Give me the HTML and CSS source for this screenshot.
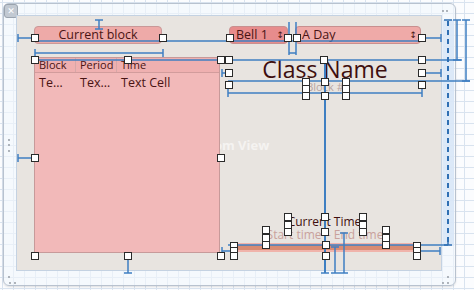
FILE: index.html
```html
<!DOCTYPE html>
<html lang="en">
<head>
    <meta charset="UTF-8">
    <title>Bell Schedule - Interface Builder</title>
    <link rel="stylesheet" href="styles.css">
</head>
<body>

    <div class="canvas">
        <div class="window">
            <div class="close-btn">&#x2715;</div>

            <div class="view">
                <div class="custom-view-label">Custom View</div>

                <div class="button current-block">Current block</div>

                <div class="table">
                    <div class="table-header">
                        <div class="col col-block">Block</div>
                        <div class="col col-period">Period</div>
                        <div class="col col-time">Time</div>
                    </div>
                    <div class="table-row">
                        <div class="col col-block">Te…</div>
                        <div class="col col-period">Tex…</div>
                        <div class="col col-time">Text Cell</div>
                    </div>
                </div>

                <div class="popup bell">
                    <span>Bell 1</span>
                    <span class="arrows">&#x2195;</span>
                </div>
                <div class="popup day">
                    <span>A Day</span>
                    <span class="arrows">&#x2195;</span>
                </div>

                <div class="label class-name">Class Name</div>
                <div class="label block-num">Block #</div>

                <div class="label current-time">Current Time</div>
                <div class="label time-range">Start time – End time</div>

                <div class="progress">
                    <div class="progress-fill"></div>
                </div>
            </div>
        </div>

        <!-- constraints and selection handles drawn over the canvas -->
        <svg class="overlay" width="474" height="290" viewBox="0 0 474 290">
            <rect x="443" y="17" width="11" height="226" fill="#d6e5f6" opacity="0.8"/>

            <g fill="#8d949c">
                <circle cx="443" cy="8" r="0.9"/><circle cx="447" cy="8" r="0.9"/>
                <circle cx="9" cy="137" r="0.9"/><circle cx="9" cy="142" r="0.9"/><circle cx="9" cy="148" r="0.9"/>
                <circle cx="9" cy="274" r="0.9"/><circle cx="10" cy="280" r="0.9"/><circle cx="15" cy="280" r="0.9"/>
                <circle cx="448" cy="274" r="0.9"/><circle cx="443" cy="280" r="0.9"/><circle cx="448" cy="280" r="0.9"/>
            </g>

            <g stroke="#3f7fc2" stroke-width="1.5" fill="none">
                <!-- guide lines -->
                <path d="M35 38H422"/>
                <path d="M35 57H462"/>
                <path d="M228 78H470"/>
                <path d="M228 242H448"/>
                <path d="M289 19V52M296 19V52"/>

                <!-- I-beams -->
                <path d="M18 35H35M18 31V39"/>
                <path d="M18 155H35M18 151V159"/>
                <path d="M99 17V26M95 17H103M95 26H103"/>
                <path d="M35 50H163M35 46V54M163 46V54"/>
                <path d="M128 253V270M124 270H132"/>
                <path d="M289 50H296"/>
                <path d="M422 35H441M441 31V39"/>
                <path d="M222 70H228M222 66V74"/>
                <path d="M422 70H441M441 66V74"/>
                <path d="M228 90H422M228 86V94M422 86V94"/>
                <path d="M222 248H234M222 244V252"/>
                <path d="M417 248H440M440 244V252"/>
                <path d="M457 17V57M453 17H461M453 57H461"/>
                <path d="M466 17V78M462 17H470M462 78H470"/>
                <path d="M335 244V270M331 244H339"/>
                <path d="M344 230V270M340 230H348"/>
                <path d="M331 270H348"/>
            </g>
            <path d="M325 57V270" stroke="#3f7fc2" stroke-width="2" fill="none"/>
            <path d="M321 270H329" stroke="#3f7fc2" stroke-width="1.5" fill="none"/>
            <path d="M448 18V240" stroke="#2f6fb3" stroke-width="2" stroke-dasharray="5 4" fill="none"/>
            <path d="M444 17H452M444 242H452M448 238V242" stroke="#2f6fb3" stroke-width="1.5" fill="none"/>

            <g id="handles" fill="#ffffff" stroke="#2a2a2a" stroke-width="1"></g>
        </svg>
    </div>

    <script>
        // selection handle centres, page coordinates
        const handles = [
            [35, 35], [163, 35],
            [35, 57], [128, 57], [221, 57], [35, 155], [221, 155], [35, 253], [128, 253], [221, 253],
            [230, 35], [288, 35], [297, 35], [422, 35],
            [229, 57], [324, 57], [422, 57], [229, 70], [422, 70], [229, 82], [422, 82],
            [306, 79], [325, 79], [346, 79], [306, 86], [346, 86], [306, 93], [325, 93], [346, 93],
            [288, 214], [325, 214], [363, 214], [288, 222], [363, 222], [288, 229], [325, 229], [363, 229],
            [266, 227], [386, 227], [266, 235], [386, 235], [266, 242], [326, 242], [386, 242],
            [234, 243], [234, 248], [234, 253], [417, 243], [417, 248], [417, 253], [326, 253]
        ];
        const group = document.getElementById('handles');
        handles.forEach(function(h) {
            const r = document.createElementNS('http://www.w3.org/2000/svg', 'rect');
            r.setAttribute('x', h[0] - 3.5);
            r.setAttribute('y', h[1] - 3.5);
            r.setAttribute('width', 7);
            r.setAttribute('height', 7);
            group.appendChild(r);
        });
    </script>

</body>
</html>
```

FILE: styles.css
```css
body {
    margin: 0;
    width: 474px;
    height: 290px;
    overflow: hidden;
    font-family: "Open Sans", "DejaVu Sans", sans-serif;
    background-color: #fbfcfe;
    background-image:
        linear-gradient(to right, #d9e3ef 1px, transparent 1px),
        linear-gradient(to bottom, #d9e3ef 1px, transparent 1px);
    background-size: 11px 11px;
    background-position: 2px 2px;
}

.canvas {
    position: relative;
    width: 474px;
    height: 290px;
}

.window {
    position: relative;
    margin: 3px 0 0 3px;
    width: 425px;
    height: 255px;
    padding: 12px 13px 14px 13px;
    border: 1px solid #b8c2cf;
    border-radius: 6px;
    background-color: rgba(242, 246, 251, 0.6);
    box-shadow: 0 1px 2px rgba(0, 0, 0, 0.12);
}

.close-btn {
    position: absolute;
    left: 0;
    top: 0;
    width: 12px;
    height: 12px;
    border: 1px solid #9aa3ae;
    border-radius: 3px;
    background-color: #c2c9d2;
    color: #ffffff;
    font-size: 9px;
    font-weight: bold;
    line-height: 12px;
    text-align: center;
}

.view {
    position: relative;
    width: 424px;
    height: 254px;
    background-color: #e8e4e0;
    box-shadow: 0 0 0 1px #c4d2e2;
    color: #4a1414;
}

.custom-view-label {
    position: absolute;
    left: 168px;
    top: 120px;
    font-size: 13px;
    font-weight: bold;
    color: #f5f3f1;
}

.button {
    position: absolute;
    box-sizing: border-box;
    border: 1px solid #c99898;
    border-radius: 4px;
    text-align: center;
}

.current-block {
    left: 17px;
    top: 10px;
    width: 128px;
    height: 18px;
    background-color: #eeaaa8;
    font-size: 12.5px;
    line-height: 16px;
}

.table {
    position: absolute;
    box-sizing: border-box;
    left: 17px;
    top: 41px;
    width: 186px;
    height: 196px;
    background-color: #f2b9b9;
    border: 1px solid #c79a9a;
}

.table-header,
.table-row {
    display: flex;
}

.table-header {
    height: 14px;
    border-bottom: 1px solid #d29c9c;
    background-color: #efb0b0;
    font-size: 11px;
    line-height: 14px;
}

.table-header .col {
    border-right: 1px solid #d6a8a8;
}

.table-row {
    font-size: 12.5px;
    line-height: 20px;
}

.col {
    box-sizing: border-box;
    padding-left: 4px;
}

.col-block {
    width: 41px;
}

.col-period {
    width: 41px;
}

.col-time {
    flex: 1;
}

.table-header .col-time {
    border-right: none;
}

.popup {
    position: absolute;
    box-sizing: border-box;
    top: 10px;
    height: 18px;
    border: 1px solid #c88f8f;
    border-radius: 4px;
    display: flex;
    justify-content: space-between;
    padding: 0 3px 0 6px;
    font-size: 12.5px;
    line-height: 16px;
}

.popup .arrows {
    font-size: 9px;
}

.bell {
    left: 212px;
    width: 59px;
    background-color: #e78c8c;
}

.day {
    left: 278px;
    width: 126px;
    background-color: #efaaa8;
}

.label {
    position: absolute;
    text-align: center;
    white-space: nowrap;
}

.class-name {
    left: 211px;
    top: 41px;
    width: 194px;
    font-size: 23px;
    line-height: 24px;
    color: #3e0e0e;
}

.block-num {
    left: 288px;
    top: 65px;
    width: 40px;
    font-size: 11px;
    line-height: 12px;
    color: #b8a4a2;
}

.current-time {
    left: 270px;
    top: 199px;
    width: 75px;
    font-size: 12px;
    line-height: 13px;
    color: #3e0e0e;
}

.time-range {
    left: 248px;
    top: 212px;
    width: 120px;
    font-size: 12px;
    line-height: 13px;
    color: #c9a19c;
}

.progress {
    position: absolute;
    box-sizing: border-box;
    left: 214px;
    top: 227px;
    width: 185px;
    height: 9px;
    padding: 2px 0;
    background-color: #f0b3ab;
}

.progress-fill {
    height: 100%;
    background-color: #d98b73;
}

.overlay {
    position: absolute;
    left: 0;
    top: 0;
}
```
